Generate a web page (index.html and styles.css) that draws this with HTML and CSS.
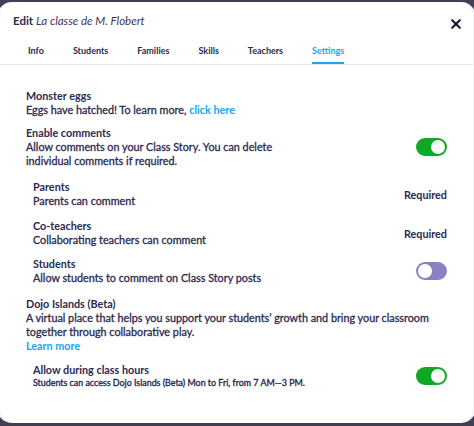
FILE: index.html
```html
<!DOCTYPE html>
<html>
<head>
<meta charset="utf-8">
<link rel="stylesheet" href="styles.css">
</head>
<body>
<div class="modal">
  <div class="header">
    <div class="title"><span class="edit">Edit</span> <span class="cls">La classe de M. Flobert</span></div>
    <div class="close">
      <svg width="10" height="10" viewBox="0 0 10 10"><path d="M1.2 1.2 L8.8 8.8 M8.8 1.2 L1.2 8.8" stroke="#1d1b33" stroke-width="2.2" stroke-linecap="round"/></svg>
    </div>
  </div>
  <div class="tabs">
    <div class="tab">Info</div>
    <div class="tab">Students</div>
    <div class="tab">Families</div>
    <div class="tab">Skills</div>
    <div class="tab">Teachers</div>
    <div class="tab active">Settings</div>
  </div>
  <div class="content">
    <div class="setting first">
      <div class="text">
        <div class="h">Monster eggs</div>
        <div class="d d-tight">Eggs have hatched! To learn more, <span class="link">click here</span></div>
      </div>
    </div>
    <div class="setting gap-s">
      <div class="text">
        <div class="h">Enable comments</div>
        <div class="d">Allow comments on your Class Story. You can delete<br>individual comments if required.</div>
      </div>
      <div class="toggle on"><span class="knob"></span></div>
    </div>
    <div class="setting sub gap-l">
      <div class="text">
        <div class="h">Parents</div>
        <div class="d">Parents can comment</div>
      </div>
      <div class="req">Required</div>
    </div>
    <div class="setting sub gap-m">
      <div class="text">
        <div class="h">Co-teachers</div>
        <div class="d">Collaborating teachers can comment</div>
      </div>
      <div class="req">Required</div>
    </div>
    <div class="setting sub">
      <div class="text">
        <div class="h">Students</div>
        <div class="d">Allow students to comment on Class Story posts</div>
      </div>
      <div class="toggle off"><span class="knob"></span></div>
    </div>
    <div class="setting gap-l">
      <div class="text">
        <div class="h">Dojo Islands (Beta)</div>
        <div class="d">A virtual place that helps you support your students’ growth and bring your classroom<br>together through collaborative play.</div>
        <div class="link">Learn more</div>
      </div>
    </div>
    <div class="setting sub">
      <div class="text">
        <div class="h">Allow during class hours</div>
        <div class="d small">Students can access Dojo Islands (Beta) Mon to Fri, from 7 AM—3 PM.</div>
      </div>
      <div class="toggle on"><span class="knob"></span></div>
    </div>
  </div>
</div>
</body>
</html>
```
FILE: styles.css
```css
html, body {
  margin: 0;
  padding: 0;
}
body {
  background: #433e55;
  width: 474px;
  height: 426px;
  overflow: hidden;
  font-family: "Lato", "Open Sans", sans-serif;
  color: #2c2a50;
}
.modal {
  margin-top: 2px;
  margin-left: -3px;
  width: 479px;
  height: 421px;
  background: #ffffff;
  border-radius: 15px;
  box-sizing: border-box;
  border-right: 3px solid #f1f1f7;
  border-left: 3px solid #f5f5fa;
}
.header {
  display: flex;
  justify-content: space-between;
  align-items: flex-start;
  padding: 12px 12px 0 13px;
  height: 26px;
}
.title {
  font-size: 11.5px;
  line-height: 14px;
}
.edit {
  font-weight: 700;
}
.cls {
  font-style: italic;
  color: #3a3856;
}
.close {
  margin-top: 5px;
  width: 10px;
  height: 10px;
  display: flex;
}
.tabs {
  display: flex;
  gap: 29px;
  padding-left: 28px;
  height: 25px;
  border-bottom: 1px solid #e6e6ee;
  box-sizing: border-box;
}
.tab {
  font-size: 9px;
  font-weight: 700;
  line-height: 22px;
  color: #2c2a50;
  box-sizing: border-box;
  height: 24px;
}
.tab.active {
  color: #1ca5ea;
  border-bottom: 2px solid #1ca5ea;
}
.content {
  padding: 24px 26px 0 26px;
}
.setting {
  display: flex;
  align-items: center;
  justify-content: space-between;
  margin-top: 10px;
}
.setting.first {
  margin-top: 0;
}
.setting.gap-s {
  margin-top: 9px;
}
.setting.gap-m {
  margin-top: 11px;
}
.setting.gap-l {
  margin-top: 12px;
}
.setting.sub {
  padding-left: 7px;
}
.h {
  font-size: 10.8px;
  font-weight: 700;
  line-height: 14px;
}
.d {
  font-size: 10.8px;
  line-height: 14px;
  font-weight: 400;
  -webkit-text-stroke: 0.3px #2c2a50;
}
.d.small {
  font-size: 8.9px;
  line-height: 12px;
  -webkit-text-stroke: 0.35px #2c2a50;
}
.link {
  color: #1ca5ea;
  font-weight: 700;
  font-size: 10.8px;
  line-height: 14px;
  -webkit-text-stroke: 0;
}
.req {
  font-size: 10.8px;
  font-weight: 700;
  color: #2c2a50;
}
.toggle {
  width: 31px;
  height: 18px;
  border-radius: 9px;
  box-sizing: border-box;
  padding: 2px;
  display: flex;
  flex-shrink: 0;
}
.toggle.on {
  background: #0fa825;
  justify-content: flex-end;
}
.toggle.off {
  background: #8a80c3;
  justify-content: flex-start;
}
.knob {
  width: 14px;
  height: 14px;
  border-radius: 50%;
  background: #ffffff;
}
```
